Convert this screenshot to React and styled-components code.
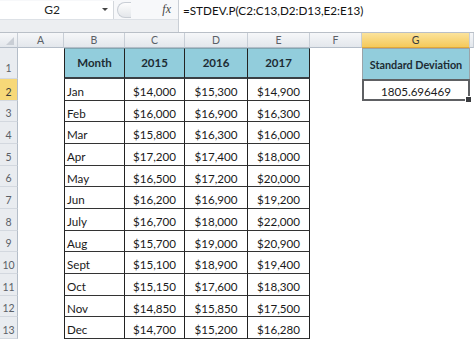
import React from "react";
import styled, { createGlobalStyle } from "styled-components";

const Global = createGlobalStyle`
  html, body { margin: 0; padding: 0; background: #fff; }
  body { font-family: Lato, "Liberation Sans", sans-serif; overflow: hidden; }
`;

const Sheet = styled.div`
  width: 474px;
  height: 343px;
  overflow: hidden;
  background: #fff;
`;

/* formula bar */
const FormulaBar = styled.div`
  display: flex;
  height: 33px;
  background: #eceef1;
  border-bottom: 1px solid #b9bfc7;
  box-sizing: border-box;
`;

const LeftPart = styled.div`
  width: 178px;
  display: flex;
  flex-direction: column;
`;

const TopRow = styled.div`
  display: flex;
  align-items: center;
  height: 19px;
  background: #f7f8fa;
  border-bottom: 1px solid #dde1e6;
`;

const NameBox = styled.div`
  width: 114px;
  height: 18px;
  display: flex;
  align-items: center;
  background: #fff;
  border-right: 1px solid #d3d7dc;
  font-size: 12px;
  color: #222;
  box-sizing: border-box;
`;

const NameText = styled.span`
  flex: 1;
  text-align: center;
  padding-left: 2px;
`;

const Arrow = styled.span`
  width: 0;
  height: 0;
  margin-right: 5px;
  border-left: 3px solid transparent;
  border-right: 3px solid transparent;
  border-top: 3px solid #444;
`;

const Knob = styled.div`
  width: 14px;
  height: 16px;
  margin-left: 3px;
  border: 1px solid #c9ced5;
  border-radius: 8px 0 0 8px;
  border-right: none;
  background: linear-gradient(#fdfdfd, #e4e7eb);
  box-sizing: border-box;
`;

const Fx = styled.span`
  margin-left: auto;
  margin-right: 7px;
  font-family: "Liberation Serif", serif;
  font-style: italic;
  font-size: 12px;
  color: #444;
`;

const FormulaArea = styled.div`
  flex: 1;
  background: #fff;
  border-left: 1px solid #c9ced5;
  font-size: 11.7px;
  color: #111;
  padding: 3px 0 0 4px;
`;

/* grid */
const Grid = styled.div`
  display: grid;
  grid-template-columns: 18px 46px 61px 60px 63px 62px 52px 108px 4px;
  grid-template-rows: 15px 31px repeat(12, 21.67px);
`;

const ColHead = styled.div`
  display: flex;
  align-items: center;
  justify-content: center;
  font-size: 10.5px;
  color: ${(p) => (p.$active ? "#3a3a3a" : "#5a5f66")};
  background: ${(p) =>
    p.$active
      ? "linear-gradient(#fbe39c, #f5c95a)"
      : "linear-gradient(#f6f7f9, #e3e7ec)"};
  border-right: 1px solid #c8ced6;
  border-bottom: 1px solid ${(p) => (p.$active ? "#e0a93a" : "#b4bdc8")};
  box-sizing: border-box;
`;

const Corner = styled(ColHead)`
  position: relative;
  &::after {
    content: "";
    position: absolute;
    right: 3px;
    bottom: 2px;
    border-left: 8px solid transparent;
    border-bottom: 8px solid #c9ced5;
  }
`;

const RowHead = styled.div`
  display: flex;
  align-items: center;
  justify-content: center;
  font-size: 10.5px;
  padding-top: ${(p) => (p.$tall ? "10px" : "5px")};
  color: ${(p) => (p.$active ? "#3a3a3a" : "#5a5f66")};
  background: ${(p) => (p.$active ? "#f7d878" : "#e9ecf0")};
  border-right: 1px solid #b4bdc8;
  border-bottom: 1px solid #d3d8df;
  box-sizing: border-box;
`;

const Blank = styled.div``;

const Cell = styled.div`
  display: flex;
  align-items: ${(p) => (p.$head ? "center" : "flex-end")};
  justify-content: ${(p) => (p.$left ? "flex-start" : "center")};
  padding: ${(p) => (p.$left ? "0 0 1.5px 2px" : "0 0 1.5px 0")};
  font-size: ${(p) => (p.$head ? "11.5px" : "11.6px")};
  font-weight: ${(p) => (p.$head ? 700 : 400)};
  color: ${(p) => (p.$head ? "#1d2b33" : "#1a1a1a")};
  background: ${(p) => (p.$head ? "#92cddc" : "#fff")};
  border-right: 1px solid #222;
  border-bottom: ${(p) => (p.$head ? "2px solid #3a3f44" : "1px solid #333")};
  border-left: ${(p) => (p.$first ? "1px solid #222" : "none")};
  border-top: ${(p) => (p.$head ? "1px solid #7fa7b2" : "none")};
  box-sizing: border-box;
  white-space: nowrap;
`;

const StdHead = styled(Cell)`
  border: 1px solid #9aa3a8;
  border-bottom: none;
  padding: 0;
  align-items: center;
  font-size: 10.8px;
`;

const Selected = styled.div`
  position: relative;
  display: flex;
  align-items: flex-end;
  justify-content: center;
  padding-bottom: 0.5px;
  font-size: 11.6px;
  color: #1a1a1a;
  border: 2px solid #5e6063;
  box-sizing: border-box;
  &::after {
    content: "";
    position: absolute;
    right: -4px;
    bottom: -4px;
    width: 5px;
    height: 5px;
    background: #3a3c3f;
    border: 1px solid #fff;
  }
`;

const cols = ["A", "B", "C", "D", "E", "F", "G"];

const data = [
  ["Jan", "$14,000", "$15,300", "$14,900"],
  ["Feb", "$16,000", "$16,900", "$16,300"],
  ["Mar", "$15,800", "$16,300", "$16,000"],
  ["Apr", "$17,200", "$17,400", "$18,000"],
  ["May", "$16,500", "$17,200", "$20,000"],
  ["Jun", "$16,200", "$16,900", "$19,200"],
  ["July", "$16,700", "$18,000", "$22,000"],
  ["Aug", "$15,700", "$19,000", "$20,900"],
  ["Sept", "$15,100", "$18,900", "$19,400"],
  ["Oct", "$15,150", "$17,600", "$18,300"],
  ["Nov", "$14,850", "$15,850", "$17,500"],
  ["Dec", "$14,700", "$15,200", "$16,280"],
];

export default function App() {
  return (
    <Sheet>
      <Global />
      <FormulaBar>
        <LeftPart>
          <TopRow>
            <NameBox>
              <NameText>G2</NameText>
              <Arrow />
            </NameBox>
            <Knob />
            <Fx>fx</Fx>
          </TopRow>
        </LeftPart>
        <FormulaArea>=STDEV.P(C2:C13,D2:D13,E2:E13)</FormulaArea>
      </FormulaBar>

      <Grid>
        <Corner />
        {cols.map((c) => (
          <ColHead key={c} $active={c === "G"}>
            {c}
          </ColHead>
        ))}
        <ColHead />

        <RowHead $tall>1</RowHead>
        <Blank />
        <Cell $head $first>Month</Cell>
        <Cell $head>2015</Cell>
        <Cell $head>2016</Cell>
        <Cell $head>2017</Cell>
        <Blank />
        <StdHead $head>Standard Deviation</StdHead>
        <Blank />

        {data.map((row, i) => (
          <React.Fragment key={row[0]}>
            <RowHead $active={i === 0}>{i + 2}</RowHead>
            <Blank />
            <Cell $first $left>{row[0]}</Cell>
            <Cell>{row[1]}</Cell>
            <Cell>{row[2]}</Cell>
            <Cell>{row[3]}</Cell>
            <Blank />
            {i === 0 ? <Selected>1805.696469</Selected> : <Blank />}
            <Blank />
          </React.Fragment>
        ))}
      </Grid>
    </Sheet>
  );
}
